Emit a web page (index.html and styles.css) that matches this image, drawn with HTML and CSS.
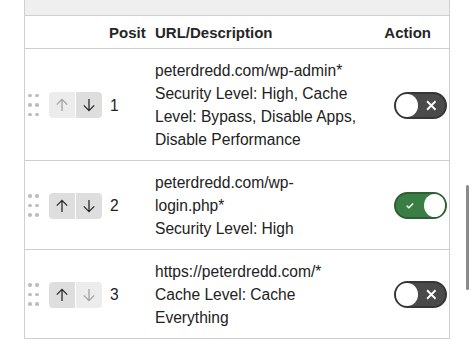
FILE: index.html
```html
<!DOCTYPE html>
<html>
<head>
    <title>Page Rules</title>
    <link rel="stylesheet" href="styles.css">
</head>
<body>
    <div class="rules">
        <div class="top-band"></div>
        <div class="row head">
            <div class="cell c-move"></div>
            <div class="cell c-pos">Posit</div>
            <div class="cell c-desc">URL/Description</div>
            <div class="cell c-action">Action</div>
        </div>

        <div class="row">
            <div class="cell c-move">
                <span class="grip"><i></i><i></i><i></i><i></i><i></i><i></i></span>
                <span class="arrows">
                    <button class="arrow off"><svg viewBox="0 0 16 16"><path d="M8 14V2.5M2.8 7.6L8 2.4l5.2 5.2"/></svg></button>
                    <button class="arrow"><svg viewBox="0 0 16 16"><path d="M8 2v11.5M2.8 8.4L8 13.6l5.2-5.2"/></svg></button>
                </span>
            </div>
            <div class="cell c-pos">1</div>
            <div class="cell c-desc">peterdredd.com/wp-admin*<br>Security Level: High, Cache Level: Bypass, Disable Apps, Disable Performance</div>
            <div class="cell c-action">
                <span class="toggle"><span class="knob"></span><svg class="mark" viewBox="0 0 12 12"><path d="M2 2l8 8M10 2l-8 8"/></svg></span>
            </div>
        </div>

        <div class="row">
            <div class="cell c-move">
                <span class="grip"><i></i><i></i><i></i><i></i><i></i><i></i></span>
                <span class="arrows">
                    <button class="arrow"><svg viewBox="0 0 16 16"><path d="M8 14V2.5M2.8 7.6L8 2.4l5.2 5.2"/></svg></button>
                    <button class="arrow"><svg viewBox="0 0 16 16"><path d="M8 2v11.5M2.8 8.4L8 13.6l5.2-5.2"/></svg></button>
                </span>
            </div>
            <div class="cell c-pos">2</div>
            <div class="cell c-desc">peterdredd.com/wp-login.php*<br>Security Level: High</div>
            <div class="cell c-action">
                <span class="toggle on"><svg class="mark" viewBox="0 0 12 12"><path d="M2 6.3l2.6 2.5 5.2-5.2"/></svg><span class="knob"></span></span>
            </div>
        </div>

        <div class="row">
            <div class="cell c-move">
                <span class="grip"><i></i><i></i><i></i><i></i><i></i><i></i></span>
                <span class="arrows">
                    <button class="arrow"><svg viewBox="0 0 16 16"><path d="M8 14V2.5M2.8 7.6L8 2.4l5.2 5.2"/></svg></button>
                    <button class="arrow off"><svg viewBox="0 0 16 16"><path d="M8 2v11.5M2.8 8.4L8 13.6l5.2-5.2"/></svg></button>
                </span>
            </div>
            <div class="cell c-pos">3</div>
            <div class="cell c-desc">https://peterdredd.com/*<br>Cache Level: Cache Everything</div>
            <div class="cell c-action">
                <span class="toggle"><span class="knob"></span><svg class="mark" viewBox="0 0 12 12"><path d="M2 2l8 8M10 2l-8 8"/></svg></span>
            </div>
        </div>
    </div>
    <div class="scrollbar"></div>
</body>
</html>
```

FILE: styles.css
```css
body {
    font-family: "Liberation Sans", Arial, sans-serif;
    font-size: 15.6px;
    color: #222222;
    background-color: #ffffff;
    margin: 0;
    padding: 0 0 0 24px;
    overflow: hidden;
}

.rules {
    width: 424px;
    border-left: 1px solid #cfcfcf;
    border-right: 1px solid #cfcfcf;
}

.top-band {
    height: 15px;
    background-color: #efefef;
    border-bottom: 1px solid #cfcfcf;
}

.row {
    display: flex;
    align-items: center;
    border-bottom: 1px solid #cfcfcf;
    padding: 10px 0 9px;
}

.row.head {
    padding: 0;
    height: 32px;
    font-weight: bold;
    font-size: 15px;
    color: #262626;
}

.cell {
    line-height: 23px;
}

.c-move {
    width: 80px;
    display: flex;
    align-items: center;
    padding-left: 3px;
    box-sizing: border-box;
}

.c-pos {
    width: 46px;
    padding-left: 5px;
    box-sizing: border-box;
    white-space: nowrap;
    overflow: hidden;
}

.head .c-pos {
    padding-left: 4px;
}

.c-desc {
    width: 214px;
    padding: 0 5px 0 4px;
    box-sizing: border-box;
    overflow-wrap: break-word;
}

.c-action {
    flex: 1;
    display: flex;
    justify-content: flex-end;
    padding-right: 2px;
}

.head .c-action {
    padding-right: 18px;
}

.grip {
    display: grid;
    grid-template-columns: 3px 3px;
    gap: 6px 4px;
    margin-right: 11px;
}

.grip i {
    width: 3.5px;
    height: 3.5px;
    border-radius: 50%;
    background-color: #bdbdbd;
}

.arrows {
    display: flex;
    gap: 1px;
}

.arrow {
    width: 26px;
    height: 26px;
    border: none;
    padding: 0;
    background-color: #dedede;
    display: flex;
    align-items: center;
    justify-content: center;
}

.arrow:first-child {
    border-radius: 4px 0 0 4px;
}

.arrow:last-child {
    border-radius: 0 4px 4px 0;
}

.arrow svg {
    width: 16px;
    height: 16px;
    fill: none;
    stroke: #2a2a2a;
    stroke-width: 1.3;
}

.arrow.off {
    background-color: #ececec;
}

.arrow.off svg {
    stroke: #a2a2a2;
}

.toggle {
    width: 49px;
    height: 23px;
    border: 2px solid #363636;
    border-radius: 14px;
    background-color: #4a4a4a;
    display: flex;
    align-items: center;
    justify-content: space-between;
}

.toggle .knob {
    width: 23px;
    height: 23px;
    border-radius: 50%;
    background-color: #ffffff;
}

.toggle .mark {
    width: 13px;
    height: 13px;
    margin: 0 7px;
    fill: none;
    stroke: #ffffff;
    stroke-width: 1.8;
}

.toggle.on {
    background-color: #3b7e45;
    border-color: #2c5f33;
}

.toggle.on .mark {
    width: 11px;
    height: 11px;
    margin: 0 9px 0 9px;
    stroke-width: 1.6;
}

.scrollbar {
    position: absolute;
    left: 466px;
    top: 185px;
    width: 3px;
    height: 105px;
    border-radius: 2px;
    background-color: #8a8a8a;
}
```
